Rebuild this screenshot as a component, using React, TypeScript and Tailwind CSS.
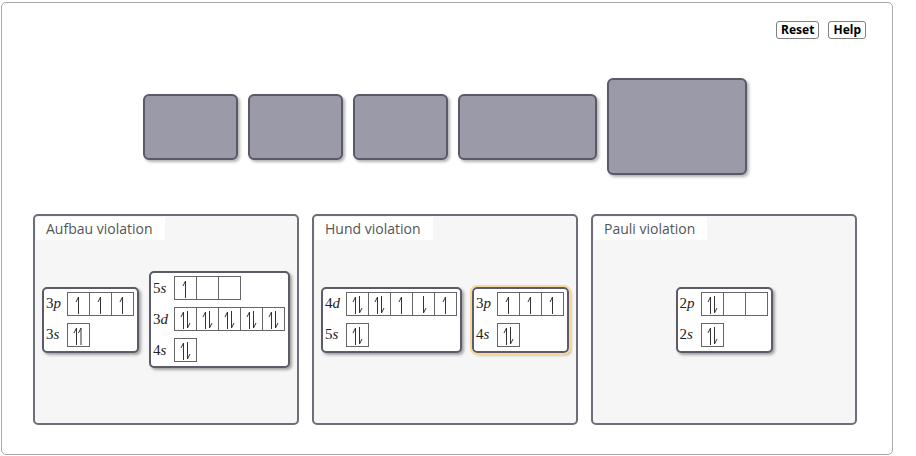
import React from "react";

type Slot = "" | "u" | "d" | "ud" | "uu";
type Row = { n: string; l: string; slots: Slot[] };

const PANELS: { title: string; cards: { rows: Row[]; selected?: boolean }[] }[] = [
  {
    title: "Aufbau violation",
    cards: [
      {
        rows: [
          { n: "3", l: "p", slots: ["u", "u", "u"] },
          { n: "3", l: "s", slots: ["uu"] },
        ],
      },
      {
        rows: [
          { n: "5", l: "s", slots: ["u", "", ""] },
          { n: "3", l: "d", slots: ["ud", "ud", "ud", "ud", "ud"] },
          { n: "4", l: "s", slots: ["ud"] },
        ],
      },
    ],
  },
  {
    title: "Hund violation",
    cards: [
      {
        rows: [
          { n: "4", l: "d", slots: ["ud", "ud", "u", "d", "u"] },
          { n: "5", l: "s", slots: ["ud"] },
        ],
      },
      {
        selected: true,
        rows: [
          { n: "3", l: "p", slots: ["u", "u", "u"] },
          { n: "4", l: "s", slots: ["ud"] },
        ],
      },
    ],
  },
  {
    title: "Pauli violation",
    cards: [
      {
        rows: [
          { n: "2", l: "p", slots: ["ud", "", ""] },
          { n: "2", l: "s", slots: ["ud"] },
        ],
      },
    ],
  },
];

const TILES = [
  "w-[95px] h-[66px]",
  "w-[95px] h-[66px]",
  "w-[95px] h-[66px]",
  "w-[139px] h-[66px]",
  "w-[140px] h-[97px]",
];

function Up({ x }: { x: number }) {
  return <path d={`M${x} 21 L${x} 4 M${x} 4 L${x - 2.5} 9`} />;
}

function Down({ x }: { x: number }) {
  return <path d={`M${x} 3 L${x} 20 M${x} 20 L${x + 2.5} 15`} />;
}

function Box({ slot, first }: { slot: Slot; first: boolean }) {
  return (
    <div
      className={`w-[23px] h-[24px] border border-[#666] bg-white ${first ? "" : "-ml-px"}`}
    >
      <svg width="21" height="22" viewBox="0 0 21 22" fill="none" stroke="#333" strokeWidth="1">
        {slot === "u" && <Up x={10.5} />}
        {slot === "d" && <Down x={10.5} />}
        {slot === "ud" && (
          <>
            <Up x={8.5} />
            <Down x={12.5} />
          </>
        )}
        {slot === "uu" && (
          <>
            <Up x={8.5} />
            <Up x={13} />
          </>
        )}
      </svg>
    </div>
  );
}

function Card({ rows, selected }: { rows: Row[]; selected?: boolean }) {
  return (
    <div
      className={`flex flex-col gap-[7px] rounded-[5px] border-2 border-[#5c5c68] bg-white pt-[3px] pb-[4px] pr-[3px] shadow-[2px_2px_3px_rgba(0,0,0,0.35)] ${
        selected ? "outline-2 outline-[#f9d69c]" : ""
      }`}
    >
      {rows.map((r, i) => (
        <div key={i} className="flex items-center">
          <span
            className="w-[23px] pl-[2px] text-[15px] leading-none text-[#222]"
            style={{ fontFamily: '"Liberation Serif", serif' }}
          >
            {r.n}
            <i>{r.l}</i>
          </span>
          <div className="flex">
            {r.slots.map((s, j) => (
              <Box key={j} slot={s} first={j === 0} />
            ))}
          </div>
        </div>
      ))}
    </div>
  );
}

export default function App() {
  return (
    <div
      className="ml-px mt-[2px] flex h-[453px] w-[892px] flex-col rounded-[5px] border border-[#aaa] bg-white"
      style={{ fontFamily: '"Open Sans", "Noto Sans", sans-serif' }}
    >
      {/* Controls */}
      <div className="flex justify-end gap-[9px] pt-[18px] pr-[26px]">
        {["Reset", "Help"].map((b) => (
          <button
            key={b}
            className="flex h-[18px] items-center rounded-[3px] border border-[#808080] bg-white px-[4px] text-[12px] font-bold leading-none text-black"
            style={{ fontFamily: '"Noto Sans", sans-serif' }}
          >
            {b}
          </button>
        ))}
      </div>

      {/* Tiles */}
      <div className="mt-[39px] flex items-center justify-center gap-[10px] pr-[5px]">
        {TILES.map((t, i) => (
          <div
            key={i}
            className={`${t} rounded-[6px] border-2 border-[#5a5a66] bg-[#9b9aa9] shadow-[2px_2px_3px_rgba(0,0,0,0.3)]`}
          />
        ))}
      </div>

      {/* Categories */}
      <div className="mt-[39px] flex gap-[13px] pl-[31px]">
        {PANELS.map((p) => (
          <div
            key={p.title}
            className="relative h-[211px] w-[266px] rounded-[5px] border-2 border-[#6e6e7a] bg-[#f6f6f6]"
          >
            <div className="absolute left-px top-px flex h-[23px] items-center bg-white pl-[10px] pr-[12px] text-[14px] text-[#555]">
              {p.title}
            </div>
            <div className="flex h-full items-center justify-center gap-[10px]">
              {p.cards.map((c, i) => (
                <Card key={i} rows={c.rows} selected={c.selected} />
              ))}
            </div>
          </div>
        ))}
      </div>
    </div>
  );
}
